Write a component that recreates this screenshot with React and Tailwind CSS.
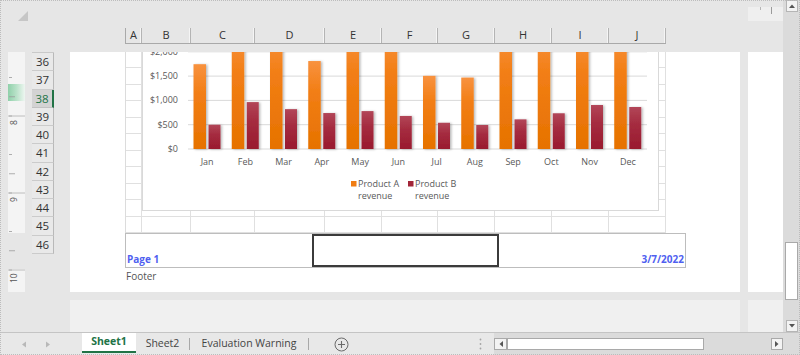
import React from "react";

const COLS = [
  ["A", 16],
  ["B", 49],
  ["C", 64],
  ["D", 70],
  ["E", 57],
  ["F", 56],
  ["G", 57],
  ["H", 57],
  ["I", 57],
  ["J", 57],
];

const ROWS = [36, 37, 38, 39, 40, 41, 42, 43, 44, 45, 46];

const DATA = [
  ["Jan", 1745, 500],
  ["Feb", 2400, 965],
  ["Mar", 2400, 820],
  ["Apr", 1810, 740],
  ["May", 2400, 780],
  ["Jun", 2400, 680],
  ["Jul", 1505, 540],
  ["Aug", 1470, 494],
  ["Sep", 2400, 610],
  ["Oct", 2400, 735],
  ["Nov", 2400, 905],
  ["Dec", 2400, 864],
];

const Chart = () => {
  const y0 = 97;
  const k = 24.3 / 500;
  const step = 38.25;
  const x0 = 46;
  return (
    <svg
      width="517"
      height="159"
      className="absolute left-[16px] top-0"
      style={{ fontFamily: '"Open Sans", "Liberation Sans", sans-serif' }}
    >
      <defs>
        <linearGradient id="ga" x1="0" y1="0" x2="0" y2="1">
          <stop offset="0" stopColor="#f8923f" />
          <stop offset="0.35" stopColor="#f27e15" />
          <stop offset="1" stopColor="#e67200" />
        </linearGradient>
        <linearGradient id="gb" x1="0" y1="0" x2="0" y2="1">
          <stop offset="0" stopColor="#b24658" />
          <stop offset="0.4" stopColor="#a52c40" />
          <stop offset="1" stopColor="#991a2e" />
        </linearGradient>
        <filter id="sh" x="-50%" y="-10%" width="200%" height="130%">
          <feDropShadow dx="1.5" dy="0.5" stdDeviation="1" floodColor="#000" floodOpacity="0.28" />
        </filter>
      </defs>
      <rect x="0.5" y="-5" width="516" height="163.5" fill="#fff" stroke="#d9d9d9" />
      {[0, 1, 2, 3, 4].map((i) => (
        <line key={i} x1={x0} x2="505" y1={y0 - i * 24.3} y2={y0 - i * 24.3} stroke="#d9d9d9" strokeWidth="1" />
      ))}
      {["$0", "$500", "$1,000", "$1,500", "$2,000"].map((t, i) => (
        <text key={t} x="36" y={y0 - i * 24.3 + 3} textAnchor="end" fontSize="9" fill="#595959">
          {t}
        </text>
      ))}
      {DATA.map(([m, a, b], i) => {
        const cx = x0 + i * step;
        const ha = a * k;
        const hb = b * k;
        return (
          <g key={m}>
            <rect x={cx + 5.5} y={y0 - ha} width="12.5" height={ha} fill="url(#ga)" filter="url(#sh)" />
            <rect x={cx + 20.5} y={y0 - hb} width="12" height={hb} fill="url(#gb)" filter="url(#sh)" />
            <text x={cx + step / 2} y="112.5" textAnchor="middle" fontSize="9" fill="#595959">
              {m}
            </text>
          </g>
        );
      })}
      <rect x="209" y="129" width="5.5" height="5.5" fill="#f07c12" />
      <text x="216" y="134.5" fontSize="9" fill="#595959">Product A</text>
      <text x="216" y="146.5" fontSize="9" fill="#595959">revenue</text>
      <rect x="266" y="129" width="5.5" height="5.5" fill="#a22538" />
      <text x="273" y="134.5" fontSize="9" fill="#595959">Product B</text>
      <text x="273" y="146.5" fontSize="9" fill="#595959">revenue</text>
    </svg>
  );
};

const Ruler = () => {
  const ticks = [];
  for (let i = -3; i < 10; i++) ticks.push(116 - 52 + i * 19.25);
  return (
    <div className="relative ml-[8px] w-[17px] h-[240px]">
      <div className="flex flex-col h-full">
        <div className="h-[32px] bg-[#f4f4f4]" />
        <div className="h-[17px] bg-gradient-to-r from-[#8fd0aa] via-[#b9e2c9] to-[#eef6f1]" />
        <div className="h-[132px] bg-[#f4f4f4]" />
        <div className="h-[36px]" />
        <div className="h-[23px] bg-[#f4f4f4]" />
      </div>
      <svg width="17" height="240" className="absolute left-0 top-0">
        {ticks.map((t, i) => {
          const mod = ((i % 4) + 4) % 4;
          if (mod === 0) return null;
          return <line key={i} x1="1" x2={mod === 2 ? 7 : 4} y1={t} y2={t} stroke="#9a9a9a" strokeWidth="0.8" />;
        })}
        {[["8", 64, 9], ["9", 141, 9], ["10", 218, 13]].map(([n, y, off]) => (
          <g key={n}>
            <line x1="0" x2="17" y1={y} y2={y} stroke="#b0b0b0" strokeWidth="0.8" />
            <text
              x="0"
              y="0"
              transform={`translate(9 ${y + off}) rotate(-90)`}
              fontSize="8.5"
              fill="#555"
              style={{ fontFamily: '"Open Sans", sans-serif' }}
            >
              {n}
            </text>
          </g>
        ))}
      </svg>
    </div>
  );
};

const RowHeaders = () => (
  <div className="ml-[7px] w-[22px] h-[181px] flex flex-col border-t border-[#c9c9c9]">
    {ROWS.map((r) =>
      r === 38 ? (
        <div
          key={r}
          className="flex-1 flex items-center justify-center bg-[#d3d3d3] border-b border-r-2 border-b-[#c2c2c2] border-r-[#217346] text-[#217346] text-[11.5px]"
        >
          {r}
        </div>
      ) : (
        <div
          key={r}
          className="flex-1 flex items-center justify-center bg-[#e9e9e9] border-b border-r border-b-[#cbcbcb] border-r-[#b9b9b9] text-[#333] text-[11.5px]"
        >
          {r}
        </div>
      )
    )}
  </div>
);

const Grid = () => (
  <div className="relative w-[540px] h-[181px] grid grid-cols-[16px_49px_64px_70px_57px_56px_57px_57px_57px_57px] grid-rows-[repeat(11,minmax(0,1fr))] border-l border-[#dcdcdc]">
    {ROWS.map((r) =>
      COLS.map(([c]) => <div key={`${r}${c}`} className="border-r border-b border-[#e0e0e0]" />)
    )}
    <Chart />
  </div>
);

const Page = () => (
  <div className="w-[670px] h-[240px] bg-white pl-[55px] flex flex-col">
    <Grid />
    <div className="w-[561px] h-[35px] flex border border-[#bdbdbd] font-['Open_Sans',sans-serif] text-[10px] font-bold text-[#4f5ff0]">
      <div className="w-[186px] flex items-end pl-[1px] pb-px leading-[13px]">Page 1</div>
      <div className="w-[187px] border-2 border-[#3b3b3b]" />
      <div className="flex-1 flex items-end justify-end pr-[1px] pb-px leading-[13px]">3/7/2022</div>
    </div>
    <div className="pl-[1px] pt-[2px] text-[10px] leading-[13px] text-[#555] font-['Open_Sans',sans-serif]">Footer</div>
  </div>
);

const ColumnHeaders = () => (
  <div className="mt-[28px] h-[16px] flex border-b border-l border-[#a9a9a9]">
    {COLS.map(([c, w]) => (
      <div
        key={c}
        style={{ width: w }}
        className="h-full flex items-center justify-center border-r border-[#b4b4b4] text-[11px] text-[#333] shadow-[inset_-1px_0_0_#f5f5f5]"
      >
        {c}
      </div>
    ))}
  </div>
);

const VScroll = () => (
  <div className="w-[17px] h-[332px] bg-[#dbdbdb] flex flex-col items-center">
    <div className="mt-0 w-[12px] h-[12px] bg-[#f3f3f3] border border-[#b5b5b5] flex items-center justify-center">
      <svg width="6" height="4" viewBox="0 0 6 4">
        <path d="M0 4 L3 0.5 L6 4 Z" fill="#555" />
      </svg>
    </div>
    <div className="mt-[230px] w-[13px] h-[58px] bg-white border border-[#a9a9a9]" />
    <div className="mt-[20px] w-[12px] h-[12px] bg-[#f3f3f3] border border-[#b5b5b5] flex items-center justify-center">
      <svg width="6" height="4" viewBox="0 0 6 4">
        <path d="M0 0 L3 3.5 L6 0 Z" fill="#555" />
      </svg>
    </div>
  </div>
);

const TabBar = () => (
  <div className="h-[23px] flex items-stretch border-t border-[#c4c4c4] bg-[#e8e8e8] font-['Open_Sans',sans-serif] text-[10.5px] text-[#444]">
    <div className="w-[82px] flex items-center">
      <svg width="6" height="7" viewBox="0 0 6 7" className="ml-[21px]">
        <path d="M5 0.5 L1 3.5 L5 6.5 Z" fill="#b8b8b8" />
      </svg>
      <svg width="6" height="7" viewBox="0 0 6 7" className="ml-[18px]">
        <path d="M1 0.5 L5 3.5 L1 6.5 Z" fill="#b8b8b8" />
      </svg>
    </div>
    <div className="w-[54px] mb-[2px] bg-white border-b-2 border-[#217346] flex items-center justify-center font-bold text-[#217346]">
      Sheet1
    </div>
    <div className="w-[53px] flex items-center justify-center">Sheet2</div>
    <div className="w-px my-[5px] bg-[#a8a8a8]" />
    <div className="w-[118px] flex items-center justify-center">Evaluation Warning</div>
    <div className="w-px my-[5px] bg-[#a8a8a8]" />
    <div className="w-[40px] flex items-center justify-end">
      <svg width="15" height="15" viewBox="0 0 15 15">
        <circle cx="7.5" cy="7.5" r="6.5" fill="none" stroke="#6a6a6a" strokeWidth="1" />
        <path d="M7.5 4 V11 M4 7.5 H11" stroke="#6a6a6a" strokeWidth="1.1" />
      </svg>
    </div>
    <div className="w-[145px] flex items-center justify-end pr-[12px]">
      <svg width="3" height="12" viewBox="0 0 3 12">
        <circle cx="1.5" cy="1.5" r="0.9" fill="#a5a5a5" />
        <circle cx="1.5" cy="6" r="0.9" fill="#a5a5a5" />
        <circle cx="1.5" cy="10.5" r="0.9" fill="#a5a5a5" />
      </svg>
    </div>
    <div className="w-[289px] flex items-center bg-[#dbdbdb]">
      <div className="w-[13px] h-[12px] bg-[#f3f3f3] border border-[#a9a9a9] flex items-center justify-center">
        <svg width="4" height="6" viewBox="0 0 4 6">
          <path d="M4 0 L0.5 3 L4 6 Z" fill="#555" />
        </svg>
      </div>
      <div className="w-[197px] h-[12px] bg-white border border-[#a9a9a9]" />
      <div className="flex-1" />
      <div className="w-[12px] h-[12px] bg-[#f3f3f3] border border-[#a9a9a9] flex items-center justify-center">
        <svg width="4" height="6" viewBox="0 0 4 6">
          <path d="M0 0 L3.5 3 L0 6 Z" fill="#555" />
        </svg>
      </div>
    </div>
    <div className="flex-1 bg-[#dbdbdb]" />
  </div>
);

export default function App() {
  return (
    <div className="relative w-[800px] h-[355px] overflow-hidden bg-[#e6e6e6] font-['Open_Sans',sans-serif]">
      <div className="flex h-[332px]">
        <div className="w-[783px] flex flex-col">
          <div className="h-[52px] flex items-start">
            <div className="w-[125px] pl-[18px] pt-[11px]">
              <svg width="10" height="10" viewBox="0 0 10 10">
                <path d="M10 0 L10 10 L0 10 Z" fill="#c6c6c6" />
              </svg>
            </div>
            <ColumnHeaders />
            <div className="flex-1" />
            <div className="mt-[7px] w-[35px] h-[14px] bg-[#efefef] relative">
              <div className="absolute left-[23px] top-0 w-px h-[7px] bg-[#9a9a9a]" />
              <div className="absolute left-[12px] top-0 w-px h-[3px] bg-[#b5b5b5]" />
            </div>
          </div>
          <div className="h-[240px] flex">
            <Ruler />
            <RowHeaders />
            <div className="ml-[16px]">
              <Page />
            </div>
            <div className="ml-[8px] w-[35px] h-[240px] bg-white" />
          </div>
          <div className="mt-[8px] h-[32px] flex">
            <div className="ml-[70px] w-[670px] h-full bg-[#f0f0f0]" />
            <div className="ml-[8px] w-[35px] h-full bg-[#f0f0f0]" />
          </div>
        </div>
        <VScroll />
      </div>
      <TabBar />
      <div className="pointer-events-none absolute inset-0 border border-dotted border-[#bcbcbc]" />
    </div>
  );
}
